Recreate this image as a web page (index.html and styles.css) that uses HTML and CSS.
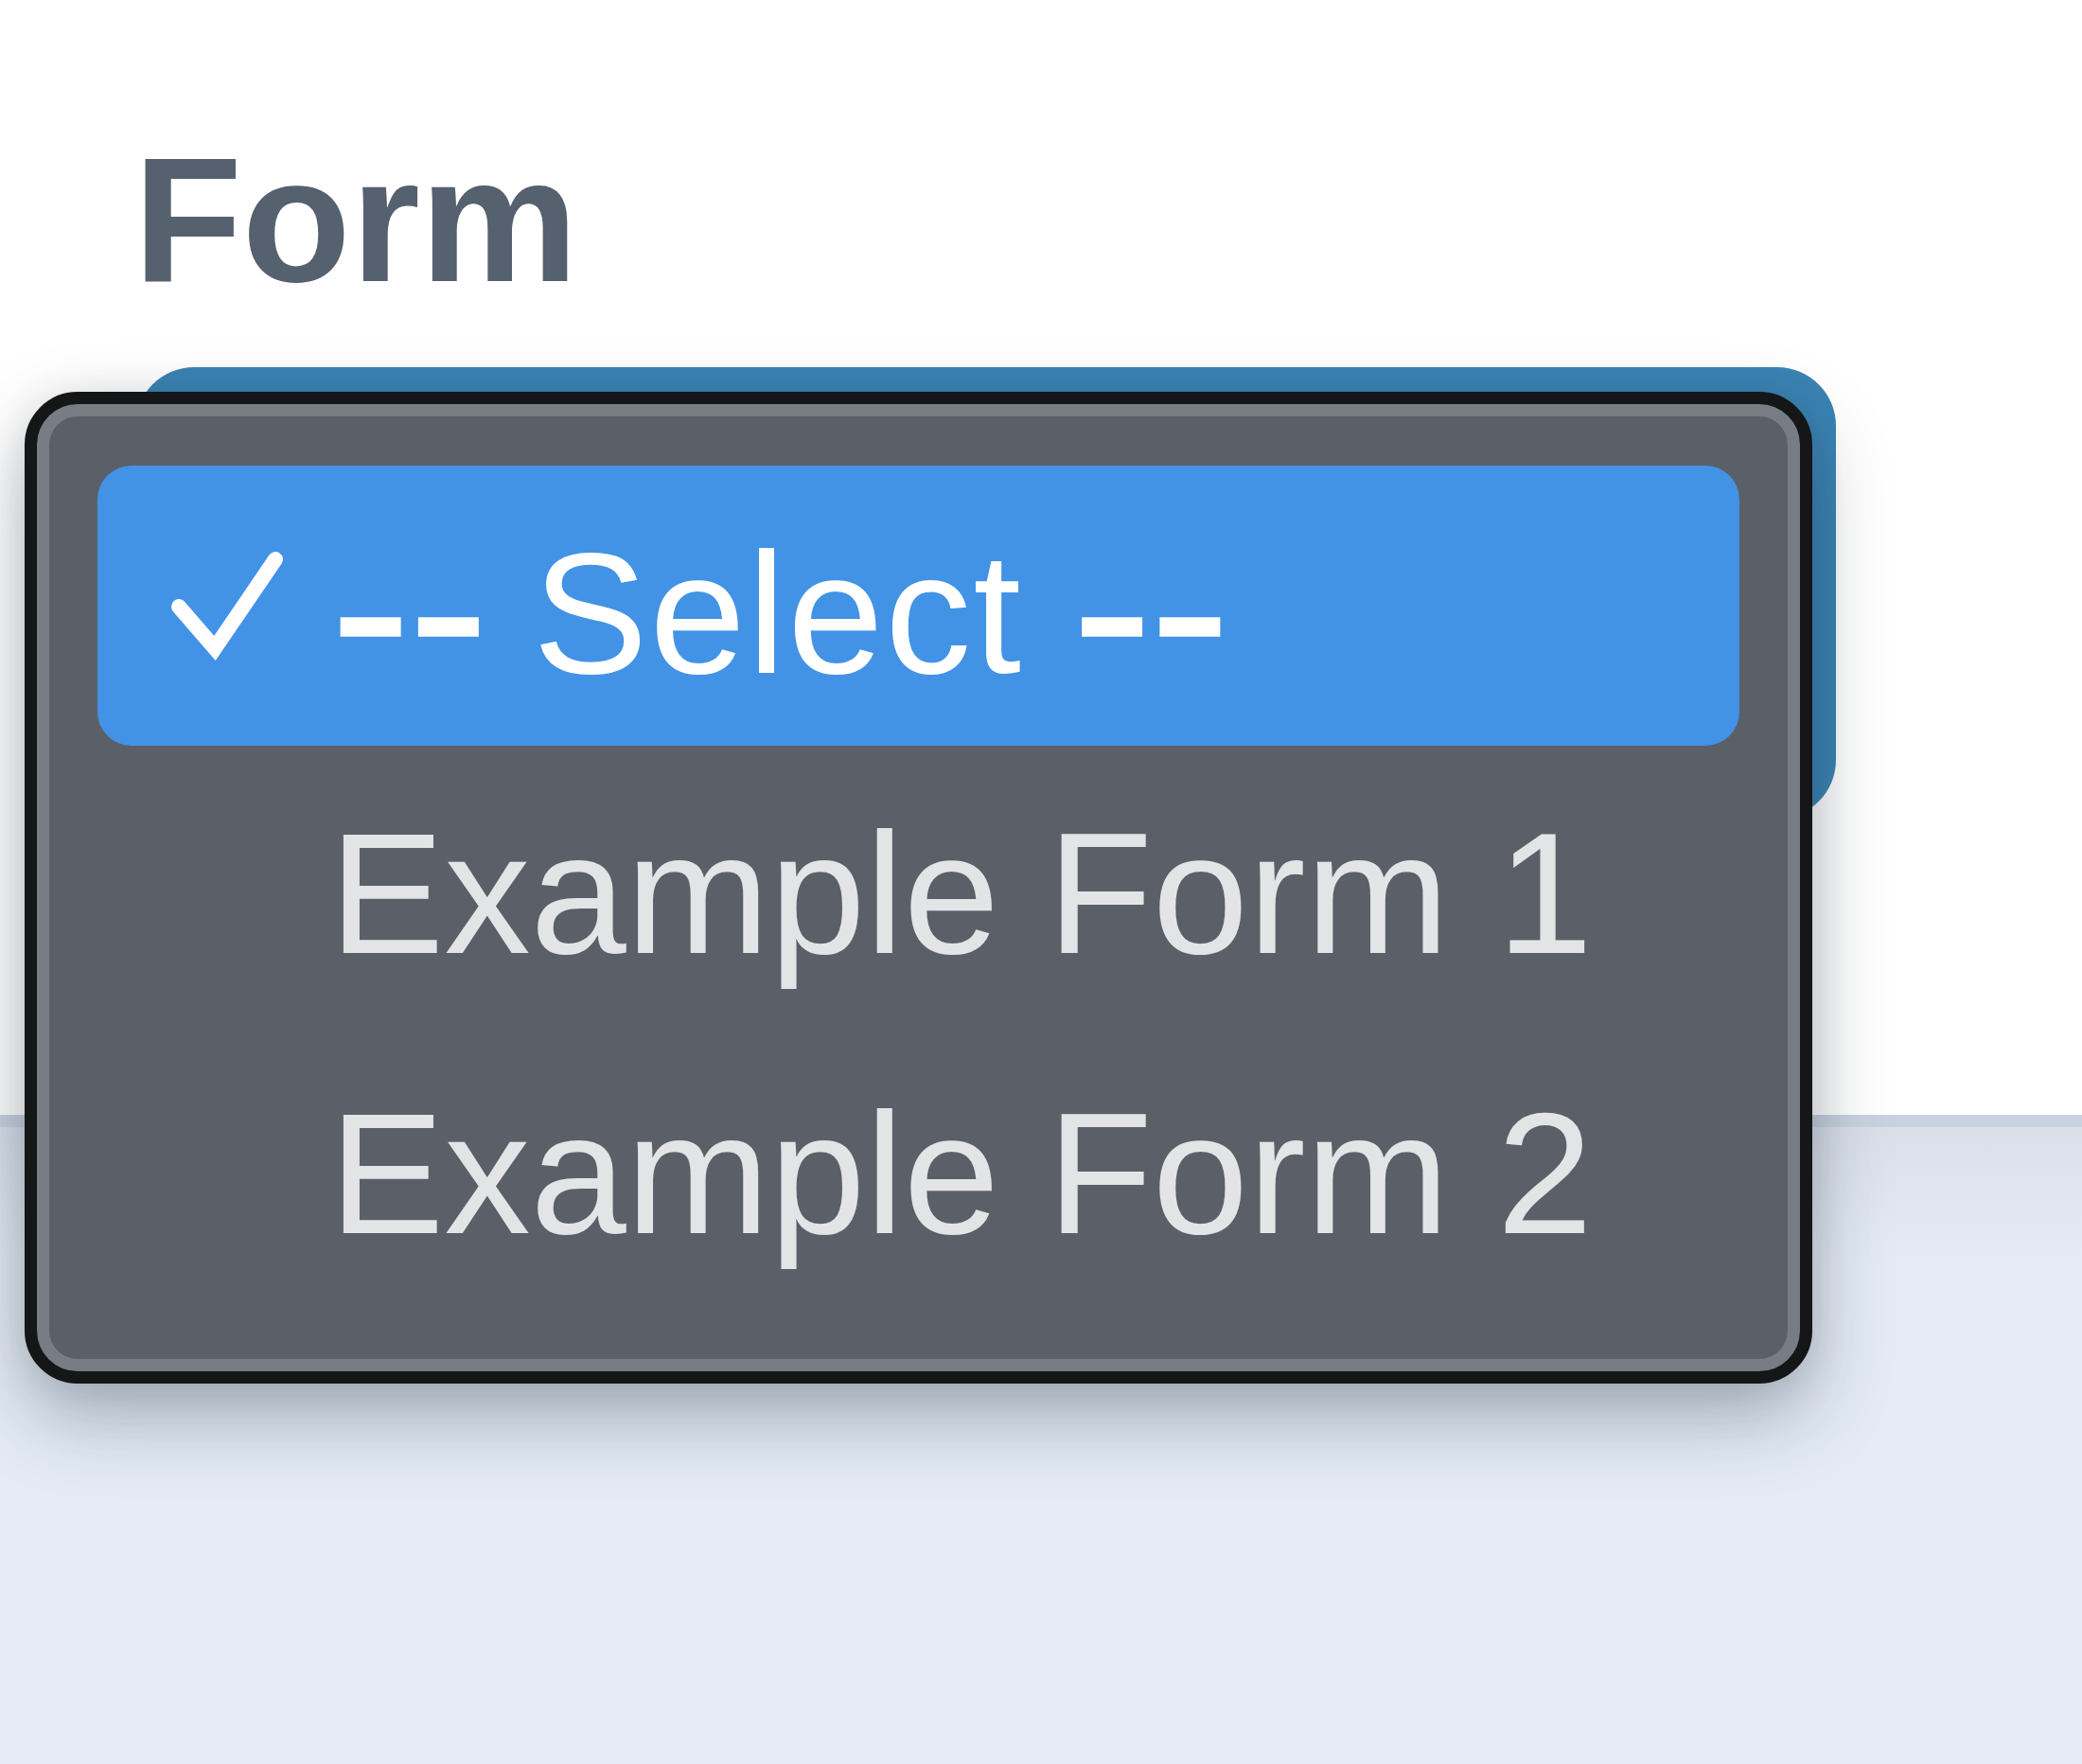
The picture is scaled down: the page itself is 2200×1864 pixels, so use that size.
FILE: index.html
```html
<!DOCTYPE html>
<html lang="en">
<head>
<meta charset="utf-8">
<title>Form select</title>
<link rel="stylesheet" href="styles.css">
</head>
<body>
  <div class="top">
    <div class="label">Form</div>
    <div class="select"></div>
    <div class="menu">
      <div class="option selected">
        <span class="check-cell">
          <svg class="check" width="245" height="296" viewBox="0 0 245 296">
            <polyline points="86,149 124,193 188,99" fill="none" stroke="#ffffff" stroke-width="16" stroke-linecap="round" stroke-linejoin="miter"/>
          </svg>
        </span>
        <span class="text"><span class="dash">--</span> <span class="word">Select</span> <span class="dash">--</span></span>
      </div>
      <div class="option">
        <span class="check-cell"></span>
        <span class="text">Example Form 1</span>
      </div>
      <div class="option">
        <span class="check-cell"></span>
        <span class="text">Example Form 2</span>
      </div>
    </div>
  </div>
  <div class="bottom"></div>
</body>
</html>
```

FILE: styles.css
```css
html, body {
  margin: 0;
  padding: 0;
}

body {
  width: 2200px;
  height: 1864px;
  overflow: hidden;
  background: #e4ebf4;
  font-family: "Liberation Sans", Arial, sans-serif;
  display: flex;
  flex-direction: column;
}

.top {
  position: relative;
  height: 1178px;
  background: #ffffff;
  padding-top: 132px;
  box-sizing: border-box;
}

.label {
  font-size: 188px;
  line-height: 200px;
  font-weight: 700;
  color: #56616f;
  padding-left: 141px;
}

.select {
  margin-top: 56px;
  margin-left: 143px;
  width: 1797px;
  height: 477px;
  border-radius: 62px;
  background: #3b84b4;
}

.menu {
  position: absolute;
  left: 26px;
  top: 414px;
  width: 1889px;
  box-sizing: border-box;
  border: 13px solid #141618;
  border-radius: 56px;
  background: #5b6068;
  box-shadow: inset 0 0 0 13px #787d84, 0 34px 80px rgba(30, 40, 55, 0.34), 0 0 40px rgba(0, 0, 0, 0.07);
  padding: 65px 64px 69px 64px;
  display: flex;
  flex-direction: column;
  z-index: 2;
}

.option {
  display: flex;
  height: 296px;
  border-radius: 36px;
  color: #e3e4e6;
  font-size: 182px;
  line-height: 280px;
  padding-top: 16px;
  box-sizing: border-box;
  white-space: nowrap;
}

.option.selected {
  background: #4293e6;
  color: #ffffff;
}

.check-cell {
  position: relative;
  flex: 0 0 245px;
  width: 245px;
}

.check {
  position: absolute;
  left: 0;
  top: -16px;
  display: block;
}

.word {
  letter-spacing: 2px;
}

.dash {
  font-size: 262px;
  line-height: 200px;
  letter-spacing: -5px;
  vertical-align: -21px;
}

.bottom {
  flex: 1;
  border-top: 13px solid #c9d3df;
  background: linear-gradient(#d9e0ea, #e4ebf4 140px);
}
```
